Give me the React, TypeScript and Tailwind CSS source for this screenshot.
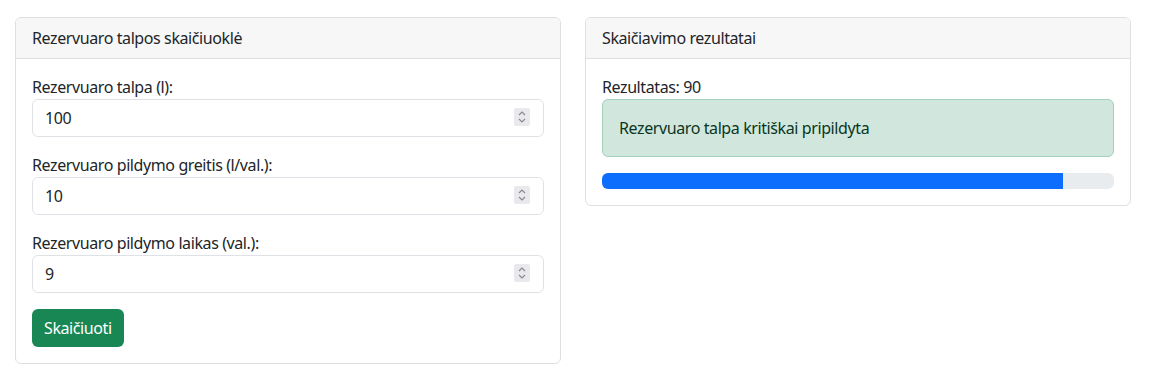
import React from "react";

const font = { fontFamily: '"Noto Sans", "Open Sans", sans-serif', letterSpacing: "-0.4px" };

function Spin() {
  return (
    <div className="absolute right-[14px] top-[9px] w-[16px] h-[18px] bg-[#e9e9ed] rounded-[2px] flex flex-col items-center justify-center gap-[2px]">
      <svg width="8" height="5" viewBox="0 0 8 5"><path d="M1 4 L4 1 L7 4" fill="none" stroke="#8a8a8a" strokeWidth="1.2" /></svg>
      <svg width="8" height="5" viewBox="0 0 8 5"><path d="M1 1 L4 4 L7 1" fill="none" stroke="#8a8a8a" strokeWidth="1.2" /></svg>
    </div>
  );
}

function Field({ label, value }: { label: string; value: string }) {
  return (
    <div className="mb-4">
      <label className="block leading-6">{label}</label>
      <div className="relative">
        <input
          type="text"
          defaultValue={value}
          className="block w-full h-[38px] px-3 py-[6px] border border-[#dee2e6] rounded-[6px] text-base leading-6 text-[#212529] bg-white outline-none"
          style={font}
        />
        <Spin />
      </div>
    </div>
  );
}

export default function App() {
  return (
    <div className="bg-white text-[#212529] text-base leading-6 min-h-[380px]" style={font}>
      <div className="grid grid-cols-[546px_546px] gap-[24px] pl-[15px] pt-[17px] items-start">
        <div className="border border-[#dfdfdf] rounded-[6px] overflow-hidden">
          <div className="px-4 py-2 bg-[#f7f7f7] border-b border-[#dfdfdf]">Rezervuaro talpos skaičiuoklė</div>
          <div className="p-4">
            <Field label="Rezervuaro talpa (l):" value="100" />
            <Field label="Rezervuaro pildymo greitis (l/val.):" value="10" />
            <Field label="Rezervuaro pildymo laikas (val.):" value="9" />
            <button className="h-[38px] px-3 py-[6px] bg-[#198754] text-white rounded-[6px] leading-6" style={font}>
              Skaičiuoti
            </button>
          </div>
        </div>
        <div className="border border-[#dfdfdf] rounded-[6px] overflow-hidden">
          <div className="px-4 py-2 bg-[#f7f7f7] border-b border-[#dfdfdf]">Skaičiavimo rezultatai</div>
          <div className="p-4">
            <div className="leading-6">Rezultatas: 90</div>
            <div className="p-4 mb-4 bg-[#d1e7dd] border border-[#a3cfbb] text-[#0a3622] rounded-[6px]">
              Rezervuaro talpa kritiškai pripildyta
            </div>
            <div className="h-4 bg-[#e9ecef] rounded-[6px] overflow-hidden flex">
              <div className="h-full bg-[#0d6efd]" style={{ width: "90%" }} />
            </div>
          </div>
        </div>
      </div>
    </div>
  );
}
